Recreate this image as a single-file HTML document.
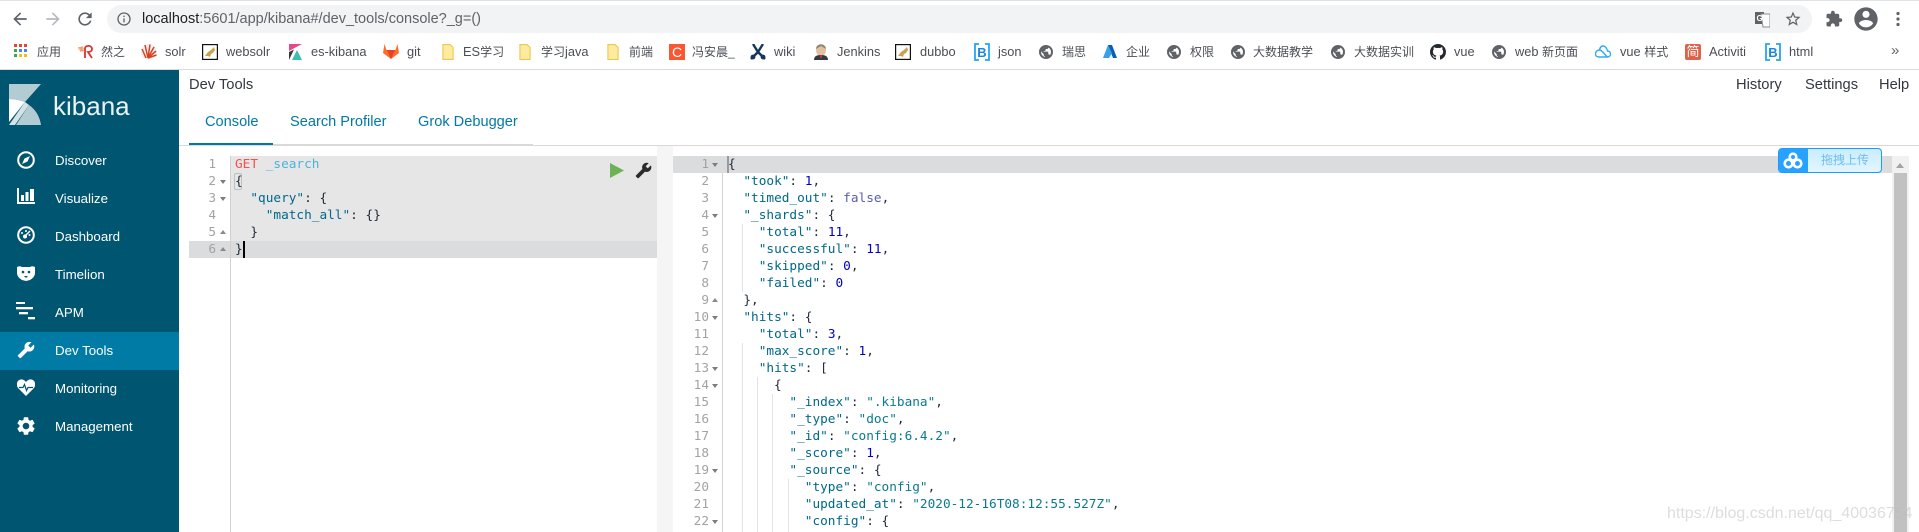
<!DOCTYPE html>
<html><head><meta charset="utf-8"><style>
*{margin:0;padding:0;box-sizing:border-box}
html,body{width:1919px;height:532px;overflow:hidden;background:#fff}
body{position:relative;font-family:"Liberation Sans","Noto Sans CJK SC",sans-serif}
.a{position:absolute}
svg{position:absolute;display:block}
.b{position:absolute;top:44px;height:16px;line-height:16px;font-size:12.8px;color:#4b4e55;white-space:nowrap}
.b i{font-style:normal;font-size:12px}
.nav{position:absolute;left:55px;margin-top:1px;font-size:13.3px;color:#fff;line-height:20px;white-space:nowrap}
.h{position:absolute;top:76px;font-size:14.7px;line-height:18px;color:#343741;white-space:nowrap}
.t{position:absolute;top:113px;font-size:14.6px;line-height:18px;color:#0079a5;white-space:nowrap}
.c{position:absolute;height:17px;line-height:17px;font-family:"DejaVu Sans Mono",monospace;font-size:12.75px;white-space:pre;color:#1f2a37}
.n{position:absolute;height:17px;line-height:17px;font-family:"DejaVu Sans Mono",monospace;font-size:12.75px;color:#a3a3a3;text-align:right;width:30px}
.s{color:#0b7a8e}.k{color:#00688a}.d{color:#0000c8}.f{color:#5a5cad}
.g{position:absolute;width:1px;background:#e3e3e3}
.ar{position:absolute;width:0;height:0;border-left:3px solid transparent;border-right:3px solid transparent}
.dn{border-top:4px solid #7d7d7d}.up{border-bottom:4px solid #8a8a8a}
</style></head><body>
<svg width="0" height="0"><defs>
<symbol id="globe" viewBox="0 0 24 24"><path fill="#5f6368" stroke="#5f6368" stroke-width="1" d="M12 2C6.48 2 2 6.48 2 12s4.48 10 10 10 10-4.48 10-10S17.52 2 12 2zm-1 17.93c-3.95-.49-7-3.85-7-7.93 0-.62.08-1.21.21-1.79L9 15v1c0 1.1.9 2 2 2v1.93zm6.9-2.54c-.26-.81-1-1.39-1.9-1.39h-1v-3c0-.55-.45-1-1-1H8v-2h2c.55 0 1-.45 1-1V7h2c1.1 0 2-.9 2-2v-.41c2.93 1.19 5 4.06 5 7.41 0 2.08-.8 3.97-2.1 5.39z"/></symbol>
<symbol id="folder" viewBox="0 0 12 17"><path fill="#fdeb9f" stroke="#edc84f" stroke-width="1.2" d="M.6.6h7.5l3.3 3v12.8H.6z"/></symbol>
<symbol id="bbox" viewBox="0 0 16 18"><path fill="none" stroke="#25a4f5" stroke-width="1.8" d="M5 1H1v16h4M11 1h4v16h-4"/><text x="8" y="14" font-size="13" font-weight="700" fill="#1787e0" text-anchor="middle" font-family="Liberation Sans">B</text></symbol>
<symbol id="cat" viewBox="0 0 16 16"><rect x=".6" y=".6" width="14.8" height="14.8" fill="#fff" stroke="#111" stroke-width="1.2"/><path fill="#c9a24f" d="M3 12l3-4 3-2 3-3 1 3-2 3-2 1-1 3-2-1z"/></symbol>
<symbol id="wrench" viewBox="0 0 24 24"><path transform="translate(24 0) scale(-1 1)" d="M22.7 19l-9.1-9.1c.9-2.3.4-5-1.5-6.9-2-2-5-2.4-7.4-1.3L9 6 6 9 1.6 4.7C.4 7.1.9 10.1 2.9 12.1c1.9 1.9 4.6 2.4 6.9 1.5l9.1 9.1c.4.4 1 .4 1.4 0l2.3-2.3c.5-.4.5-1.1.1-1.4z"/></symbol>
</defs></svg>

<!-- browser chrome -->
<div class="a" style="left:0;top:0;width:1919px;height:1px;background:#dee1e6"></div>
<svg style="left:10px;top:9px" width="20" height="20" viewBox="0 0 24 24"><path fill="#5f6368" d="M20 11H7.83l5.59-5.59L12 4l-8 8 8 8 1.41-1.41L7.83 13H20v-2z"/></svg>
<svg style="left:43px;top:9px" width="20" height="20" viewBox="0 0 24 24"><path fill="#b6b9bd" transform="translate(24 0) scale(-1 1)" d="M20 11H7.83l5.59-5.59L12 4l-8 8 8 8 1.41-1.41L7.83 13H20v-2z"/></svg>
<svg style="left:75px;top:9px" width="20" height="20" viewBox="0 0 24 24"><path fill="#5f6368" d="M17.65 6.35C16.2 4.9 14.21 4 12 4c-4.42 0-7.99 3.58-7.99 8s3.57 8 7.99 8c3.73 0 6.84-2.55 7.73-6h-2.08c-.82 2.33-3.04 4-5.65 4-3.31 0-6-2.69-6-6s2.69-6 6-6c1.66 0 3.14.69 4.22 1.78L13 11h7V4l-2.35 2.35z"/></svg>
<div class="a" style="left:107px;top:5px;width:1705px;height:28px;background:#f1f3f4;border-radius:14px"></div>
<svg style="left:116px;top:11px" width="16" height="16" viewBox="0 0 24 24"><path fill="#5f6368" d="M11 7h2v2h-2zm0 4h2v6h-2zm1-9C6.48 2 2 6.48 2 12s4.48 10 10 10 10-4.48 10-10S17.52 2 12 2zm0 18c-4.41 0-8-3.59-8-8s3.59-8 8-8 8 3.59 8 8-3.59 8-8 8z"/></svg>
<div class="a" style="left:142px;top:10px;font-size:14.5px;line-height:18px;color:#202124;white-space:nowrap">localhost<span style="color:#5f6368">:5601/app/kibana#/dev_tools/console?_g=()</span></div>
<svg style="left:1755px;top:11px" width="15" height="17" viewBox="0 0 15 17"><rect x="0" y="1" width="9" height="12" fill="#5f6368"/><path d="M6 3h9v13H8z" fill="#fff" stroke="#8a8d91"/><text x="1.5" y="10" font-size="8" fill="#fff" font-family="Liberation Sans" font-weight="700">G</text></svg>
<svg style="left:1784px;top:10px" width="18" height="18" viewBox="0 0 24 24"><path fill="#5f6368" d="M22 9.24l-7.19-.62L12 2 9.19 8.63 2 9.24l5.46 4.73L5.82 21 12 17.27 18.18 21l-1.63-7.03L22 9.24zM12 15.4l-3.76 2.27 1-4.28-3.32-2.88 4.38-.38L12 6.1l1.71 4.04 4.38.38-3.32 2.88 1 4.28L12 15.4z"/></svg>
<svg style="left:1825px;top:10px" width="18" height="18" viewBox="0 0 24 24"><path fill="#5f6368" d="M20.5 11H19V7c0-1.1-.9-2-2-2h-4V3.5C13 2.12 11.88 1 10.5 1S8 2.12 8 3.5V5H4c-1.1 0-1.99.9-1.99 2v3.8H3.5c1.49 0 2.7 1.21 2.7 2.7s-1.21 2.7-2.7 2.7H2V20c0 1.1.9 2 2 2h3.8v-1.5c0-1.49 1.21-2.7 2.7-2.7 1.49 0 2.7 1.21 2.7 2.7V22H17c1.1 0 2-.9 2-2v-4h1.5c1.38 0 2.5-1.12 2.5-2.5S21.88 11 20.5 11z"/></svg>
<svg style="left:1852px;top:5px" width="28" height="28" viewBox="0 0 24 24"><path fill="#5f6368" d="M12 2C6.48 2 2 6.48 2 12s4.48 10 10 10 10-4.48 10-10S17.52 2 12 2zm0 3c1.66 0 3 1.34 3 3s-1.34 3-3 3-3-1.34-3-3 1.34-3 3-3zm0 14.2c-2.5 0-4.71-1.28-6-3.22.03-1.99 4-3.08 6-3.08 1.99 0 5.97 1.09 6 3.08-1.29 1.94-3.5 3.22-6 3.22z"/></svg>
<svg style="left:1896px;top:11px" width="4" height="16" viewBox="0 0 4 16"><circle cx="2" cy="2.5" r="1.6" fill="#5f6368"/><circle cx="2" cy="8" r="1.6" fill="#5f6368"/><circle cx="2" cy="13.5" r="1.6" fill="#5f6368"/></svg>

<!-- bookmarks -->
<svg style="left:14px;top:44px" width="13" height="13" viewBox="0 0 13 13"><g fill="#ea4335"><rect width="3" height="3"/><rect x="5" width="3" height="3"/><rect x="10" width="3" height="3"/></g><g fill="#34a853"><rect y="5" width="3" height="3"/><rect y="10" width="3" height="3"/></g><rect x="5" y="5" width="3" height="3" fill="#4285f4"/><rect x="10" y="5" width="3" height="3" fill="#4285f4"/><g fill="#fbbc05"><rect x="5" y="10" width="3" height="3"/><rect x="10" y="10" width="3" height="3"/></g></svg>
<div class="b" style="left:37px"><i>应用</i></div>
<svg style="left:78px;top:44px" width="16" height="15" viewBox="0 0 16 15"><path d="M0 4l5-1-3 2 3 0-3 2 4-.5" fill="none" stroke="#f39a6b" stroke-width="1.2"/><path d="M7 14V4c1-3 7-3 7 1 0 2-2 3-4 3l4 6" fill="none" stroke="#d9352c" stroke-width="1.8"/></svg>
<div class="b" style="left:101px"><i>然之</i></div>
<svg style="left:141px;top:44px" width="16" height="16" viewBox="0 0 16 16"><circle cx="8" cy="8" r="8" fill="#f3f1f5"/><g stroke="#d9411e" stroke-width="1.5" fill="none"><path d="M7 14L4 1"/><path d="M7 14L9 0.5"/><path d="M7 14L13 3"/><path d="M7 14L15 7"/><path d="M7 14L15.5 11"/><path d="M5 14L1 5"/></g></svg>
<div class="b" style="left:165px">solr</div>
<svg style="left:202px;top:44px" width="16" height="16"><use href="#cat"/></svg>
<div class="b" style="left:226px">websolr</div>
<svg style="left:289px;top:44px" width="13" height="16" viewBox="0 0 13 16"><path d="M0 0h13L0 7z" fill="#e8488b"/><path d="M0 8l5-2.5L0 16z" fill="#33393c"/><path d="M3 16L8 6l5 10z" fill="#3ebeb0"/></svg>
<div class="b" style="left:311px">es-kibana</div>
<svg style="left:383px;top:44px" width="16" height="15" viewBox="0 0 16 15"><path d="M8 15L0 9l1.5-9 2 6h9l2-6L16 9z" fill="#fc6d26"/><path d="M8 15L4 6h8z" fill="#e24329"/></svg>
<div class="b" style="left:407px">git</div>
<svg style="left:442px;top:44px" width="12" height="16"><use href="#folder"/></svg>
<div class="b" style="left:463px">ES<i>学习</i></div>
<svg style="left:519px;top:44px" width="12" height="16"><use href="#folder"/></svg>
<div class="b" style="left:541px"><i>学习</i>java</div>
<svg style="left:607px;top:44px" width="12" height="16"><use href="#folder"/></svg>
<div class="b" style="left:629px"><i>前端</i></div>
<div class="a" style="left:669px;top:44px;width:16px;height:16px;background:#fc5531;color:#fff;font-size:14px;line-height:16px;text-align:center">C</div>
<div class="b" style="left:692px"><i>冯安晨_</i></div>
<svg style="left:750px;top:44px" width="16" height="16" viewBox="0 0 16 16"><path d="M3 0l5 8 5-8M1 15l7-7 7 7" fill="none" stroke="#16365c" stroke-width="2.4"/><circle cx="3" cy="13" r="2.4" fill="#16365c"/><circle cx="13" cy="13" r="2.4" fill="#16365c"/></svg>
<div class="b" style="left:774px">wiki</div>
<svg style="left:813px;top:44px" width="16" height="16" viewBox="0 0 16 16"><ellipse cx="8" cy="6" rx="5" ry="6" fill="#e2c0a0"/><path d="M3 5c0-6 10-6 10 0L8 2z" fill="#8a8478"/><path d="M1 16c0-4 3-5 7-5s7 1 7 5z" fill="#333b49"/><rect x="7" y="11" width="2" height="3" fill="#c0392b"/></svg>
<div class="b" style="left:837px">Jenkins</div>
<svg style="left:895px;top:44px" width="16" height="16"><use href="#cat"/></svg>
<div class="b" style="left:920px">dubbo</div>
<svg style="left:974px;top:43px" width="16" height="18"><use href="#bbox"/></svg>
<div class="b" style="left:998px">json</div>
<svg style="left:1038px;top:44px" width="16" height="16"><use href="#globe"/></svg>
<div class="b" style="left:1062px"><i>瑞思</i></div>
<svg style="left:1103px;top:45px" width="14" height="13" viewBox="0 0 14 13"><path d="M5 0h4l5 13h-4z" fill="#0a5fb4"/><path d="M5 0l4 8-3 5H0z" fill="#3aa0e8"/></svg>
<div class="b" style="left:1126px"><i>企业</i></div>
<svg style="left:1166px;top:44px" width="16" height="16"><use href="#globe"/></svg>
<div class="b" style="left:1190px"><i>权限</i></div>
<svg style="left:1230px;top:44px" width="16" height="16"><use href="#globe"/></svg>
<div class="b" style="left:1253px"><i>大数据教学</i></div>
<svg style="left:1330px;top:44px" width="16" height="16"><use href="#globe"/></svg>
<div class="b" style="left:1354px"><i>大数据实训</i></div>
<svg style="left:1430px;top:44px" width="16" height="16" viewBox="0 0 16 16"><path fill="#24292e" d="M8 0C3.58 0 0 3.58 0 8c0 3.54 2.29 6.53 5.47 7.59.4.07.55-.17.55-.38 0-.19-.01-.82-.01-1.49-2.01.37-2.53-.49-2.69-.94-.09-.23-.48-.94-.82-1.13-.28-.15-.68-.52-.01-.53.63-.01 1.08.58 1.23.82.72 1.21 1.87.87 2.33.66.07-.52.28-.87.51-1.07-1.78-.2-3.64-.89-3.64-3.95 0-.87.31-1.59.82-2.15-.08-.2-.36-1.02.08-2.12 0 0 .67-.21 2.2.82.64-.18 1.32-.27 2-.27.68 0 1.36.09 2 .27 1.53-1.04 2.2-.82 2.2-.82.44 1.1.16 1.92.08 2.12.51.56.82 1.27.82 2.15 0 3.07-1.87 3.75-3.65 3.95.29.25.54.73.54 1.48 0 1.07-.01 1.93-.01 2.2 0 .21.15.46.55.38A8.013 8.013 0 0016 8c0-4.42-3.58-8-8-8z"/></svg>
<div class="b" style="left:1454px">vue</div>
<svg style="left:1491px;top:44px" width="16" height="16"><use href="#globe"/></svg>
<div class="b" style="left:1515px">web <i>新页面</i></div>
<svg style="left:1595px;top:45px" width="16" height="13" viewBox="0 0 16 13"><path d="M4 12h8.5c2 0 3-1.5 3-3s-1-3-3-3C12 3 10 1 8 1S5 2.5 4.5 5C2 5 .5 7 .5 9s1.5 3 3.5 3z M4.5 5C7 5 9 9 12.5 12" fill="none" stroke="#31aaf0" stroke-width="1.4"/></svg>
<div class="b" style="left:1620px">vue <i>样式</i></div>
<div class="a" style="left:1685px;top:44px;width:16px;height:16px;background:#e0604a;color:#fff;font-size:13px;line-height:16px;text-align:center;border-radius:2px">简</div>
<div class="b" style="left:1709px">Activiti</div>
<svg style="left:1765px;top:43px" width="16" height="18"><use href="#bbox"/></svg>
<div class="b" style="left:1789px">html</div>
<div class="a" style="left:1891px;top:42px;font-size:15px;line-height:18px;color:#5f6368">»</div>
<div class="a" style="left:0;top:69px;width:1919px;height:1px;background:#d9dadc"></div>

<!-- sidebar -->
<div class="a" style="left:0;top:70px;width:179px;height:462px;background:#005571"></div>
<div class="a" style="left:0;top:332px;width:179px;height:38px;background:#007ba6"></div>
<svg style="left:9px;top:84px" width="33" height="42" viewBox="9 84 33 42"><path d="M9 84H41L25 102Q17 99 9 99Z" fill="#b3ccd4"/><path d="M9 99Q17 99 25 102L9 122V125Z" fill="#fff"/><path d="M9 125L25 102 L29 105 L15 125Z" fill="#d5e3e7"/><path d="M16 125L29 105Q39 112 41 125Z" fill="#b3ccd4"/></svg>
<div class="a" style="left:53px;top:90px;font-size:26px;line-height:32px;color:#eaf2f4;white-space:nowrap">kibana</div>

<svg style="left:17px;top:151px" width="18" height="18" viewBox="0 0 18 18"><circle cx="9" cy="9" r="7.8" fill="none" stroke="#fff" stroke-width="2"/><path d="M13 5L10.5 10.5 5 13 7.5 7.5Z" fill="#fff"/></svg>
<div class="nav" style="top:150px">Discover</div>
<svg style="left:17px;top:188px" width="18" height="16" viewBox="0 0 18 16"><path d="M0 0h2v14h16v2H0z" fill="#fff"/><rect x="4" y="7" width="3" height="6" fill="#fff"/><rect x="8.5" y="4" width="3" height="9" fill="#fff"/><rect x="13" y="1" width="4" height="12" fill="#fff"/></svg>
<div class="nav" style="top:188px">Visualize</div>
<svg style="left:17px;top:226px" width="18" height="18" viewBox="0 0 18 18"><circle cx="9" cy="9" r="7.8" fill="none" stroke="#fff" stroke-width="2"/><circle cx="8" cy="10.5" r="2" fill="#fff"/><path d="M8 10L13 5" stroke="#fff" stroke-width="1.5"/><circle cx="12.5" cy="9" r="1" fill="#fff"/><circle cx="9" cy="5" r="1" fill="#fff"/><circle cx="5" cy="7" r="1" fill="#fff"/></svg>
<div class="nav" style="top:226px">Dashboard</div>
<svg style="left:17px;top:266px" width="18" height="15" viewBox="0 0 18 15"><path d="M0 1q3-1.5 5 0h8q2-1.5 5 0v6q0 4-5 7l-4 1-4-1q-5-3-5-7z" fill="#fff"/><circle cx="6" cy="6" r="1.3" fill="#005571"/><circle cx="12" cy="6" r="1.3" fill="#005571"/><path d="M7 10h4l-2 2z" fill="#005571"/></svg>
<div class="nav" style="top:264px">Timelion</div>
<svg style="left:16px;top:302px" width="20" height="18" viewBox="0 0 20 18"><g fill="#fff"><rect x="0" y="0" width="9" height="2"/><rect x="0" y="5" width="17" height="2.3"/><rect x="3" y="10" width="9" height="2.3"/><rect x="12" y="15" width="7" height="2.3"/></g></svg>
<div class="nav" style="top:302px">APM</div>
<svg style="left:17px;top:341px;fill:#fff" width="18" height="18" viewBox="0 0 24 24"><use href="#wrench"/></svg>
<div class="nav" style="top:340px">Dev Tools</div>
<svg style="left:17px;top:379px" width="18" height="17" viewBox="0 0 18 17"><path d="M9 17L1.5 9.5C-1 7-.5 3 1.5 1.5 4-.5 7 .5 9 3c2-2.5 5-3.5 7.5-1.5 2 1.5 2.5 5.5 0 8z" fill="#fff"/><path d="M2 8.5h4l1.5-3 2 6 1.5-3h5" fill="none" stroke="#005571" stroke-width="1.2"/></svg>
<div class="nav" style="top:378px">Monitoring</div>
<svg style="left:15px;top:415px" width="22" height="22" viewBox="0 0 24 24"><path fill="#fff" d="M19.14 12.94c.04-.3.06-.61.06-.94 0-.32-.02-.64-.07-.94l2.03-1.58c.18-.14.23-.41.12-.61l-1.92-3.32c-.12-.22-.37-.29-.59-.22l-2.39.96c-.5-.38-1.03-.7-1.62-.94l-.36-2.54c-.04-.24-.24-.41-.48-.41h-3.84c-.24 0-.43.17-.47.41l-.36 2.54c-.59.24-1.13.57-1.62.94l-2.39-.96c-.22-.08-.47 0-.59.22L2.74 8.87c-.12.21-.08.47.12.61l2.03 1.58c-.05.3-.09.63-.09.94s.02.64.07.94l-2.03 1.58c-.18.14-.23.41-.12.61l1.92 3.32c.12.22.37.29.59.22l2.39-.96c.5.38 1.03.7 1.62.94l.36 2.54c.05.24.24.41.48.41h3.84c.24 0 .44-.17.47-.41l.36-2.54c.59-.24 1.13-.56 1.62-.94l2.39.96c.22.08.47 0 .59-.22l1.92-3.32c.12-.22.07-.47-.12-.61l-2.01-1.58zM12 15.6c-1.98 0-3.6-1.62-3.6-3.6s1.62-3.6 3.6-3.6 3.6 1.62 3.6 3.6-1.62 3.6-3.6 3.6z"/></svg>
<div class="nav" style="top:416px">Management</div>

<!-- header -->
<div class="h" style="left:189px">Dev Tools</div>
<div class="h" style="left:1736px">History</div>
<div class="h" style="left:1805px">Settings</div>
<div class="h" style="left:1879px">Help</div>
<div class="t" style="left:205px">Console</div>
<div class="t" style="left:290px">Search Profiler</div>
<div class="t" style="left:418px">Grok Debugger</div>
<div class="a" style="left:179px;top:145px;width:1740px;height:1px;background:#d9d9d9"></div>
<div class="a" style="left:189px;top:144px;width:344px;height:2px;background:#d9d9d9"></div>
<div class="a" style="left:189px;top:143px;width:84px;height:2px;background:#0079a5"></div>

<!-- editor -->
<div class="a" style="left:231px;top:156px;width:426px;height:85px;background:#e6e6e6"></div>
<div class="a" style="left:189px;top:241px;width:468px;height:17px;background:#dbdcdd"></div>
<div class="a" style="left:230px;top:156px;width:1px;height:376px;background:#d0d0d0"></div>
<div class="a" style="left:657px;top:146px;width:16px;height:386px;background:#f5f5f5"></div>
<div class="n" style="left:186px;top:156px">1</div>
<div class="n" style="left:186px;top:173px">2</div>
<div class="n" style="left:186px;top:190px">3</div>
<div class="n" style="left:186px;top:207px">4</div>
<div class="n" style="left:186px;top:224px">5</div>
<div class="n" style="left:186px;top:241px">6</div>
<div class="ar dn" style="left:220px;top:180px"></div>
<div class="ar dn" style="left:220px;top:197px"></div>
<div class="ar up" style="left:220px;top:230px"></div>
<div class="ar up" style="left:220px;top:247px"></div>
<div class="a" style="left:234px;top:173px;width:8px;height:17px;border:1px solid #bfbfbf;border-radius:2px"></div>
<div class="c" style="left:235px;top:156px"><span style="color:#f5504a">GET</span> <span style="color:#4db2d8">_search</span></div>
<div class="c" style="left:235px;top:173px">{</div>
<div class="c" style="left:235px;top:190px">  <span class="k">"query"</span>: {</div>
<div class="c" style="left:235px;top:207px">    <span class="k">"match_all"</span>: {}</div>
<div class="c" style="left:235px;top:224px">  }</div>
<div class="c" style="left:235px;top:241px">}</div>
<div class="a" style="left:243px;top:241px;width:2px;height:17px;background:#000"></div>
<svg style="left:610px;top:163px" width="14" height="15" viewBox="0 0 14 15"><path d="M0 0L14 7.5 0 15z" fill="#6db356"/></svg>
<svg style="left:635px;top:162px;fill:#2b2b2b" width="17" height="17" viewBox="0 0 24 24"><use href="#wrench"/></svg>

<!-- output -->
<div class="a" style="left:673px;top:156px;width:1219px;height:17px;background:#dbdcdd"></div>
<div class="a" style="left:722px;top:173px;width:1px;height:359px;background:#d4d4d4"></div>
<div class="a" style="left:727px;top:156px;width:2px;height:17px;background:#9a9a9a"></div>
<div class="g" style="left:742px;top:224px;height:68px"></div>
<div class="g" style="left:742px;top:343px;height:189px"></div>
<div class="g" style="left:757px;top:377px;height:155px"></div>
<div class="g" style="left:772px;top:394px;height:138px"></div>
<div class="g" style="left:788px;top:479px;height:53px"></div>
<div class="n" style="left:679px;top:156px">1</div>
<div class="n" style="left:679px;top:173px">2</div>
<div class="n" style="left:679px;top:190px">3</div>
<div class="n" style="left:679px;top:207px">4</div>
<div class="n" style="left:679px;top:224px">5</div>
<div class="n" style="left:679px;top:241px">6</div>
<div class="n" style="left:679px;top:258px">7</div>
<div class="n" style="left:679px;top:275px">8</div>
<div class="n" style="left:679px;top:292px">9</div>
<div class="n" style="left:679px;top:309px">10</div>
<div class="n" style="left:679px;top:326px">11</div>
<div class="n" style="left:679px;top:343px">12</div>
<div class="n" style="left:679px;top:360px">13</div>
<div class="n" style="left:679px;top:377px">14</div>
<div class="n" style="left:679px;top:394px">15</div>
<div class="n" style="left:679px;top:411px">16</div>
<div class="n" style="left:679px;top:428px">17</div>
<div class="n" style="left:679px;top:445px">18</div>
<div class="n" style="left:679px;top:462px">19</div>
<div class="n" style="left:679px;top:479px">20</div>
<div class="n" style="left:679px;top:496px">21</div>
<div class="n" style="left:679px;top:513px">22</div>
<div class="ar dn" style="left:712px;top:163px"></div>
<div class="ar dn" style="left:712px;top:214px"></div>
<div class="ar up" style="left:712px;top:298px"></div>
<div class="ar dn" style="left:712px;top:316px"></div>
<div class="ar dn" style="left:712px;top:367px"></div>
<div class="ar dn" style="left:712px;top:384px"></div>
<div class="ar dn" style="left:712px;top:469px"></div>
<div class="ar dn" style="left:712px;top:520px"></div>
<div class="c" style="left:728px;top:156px">{</div>
<div class="c" style="left:728px;top:173px">  <span class="k">"took"</span>: <span class="d">1</span>,</div>
<div class="c" style="left:728px;top:190px">  <span class="k">"timed_out"</span>: <span class="f">false</span>,</div>
<div class="c" style="left:728px;top:207px">  <span class="k">"_shards"</span>: {</div>
<div class="c" style="left:728px;top:224px">    <span class="k">"total"</span>: <span class="d">11</span>,</div>
<div class="c" style="left:728px;top:241px">    <span class="k">"successful"</span>: <span class="d">11</span>,</div>
<div class="c" style="left:728px;top:258px">    <span class="k">"skipped"</span>: <span class="d">0</span>,</div>
<div class="c" style="left:728px;top:275px">    <span class="k">"failed"</span>: <span class="d">0</span></div>
<div class="c" style="left:728px;top:292px">  },</div>
<div class="c" style="left:728px;top:309px">  <span class="k">"hits"</span>: {</div>
<div class="c" style="left:728px;top:326px">    <span class="k">"total"</span>: <span class="d">3</span>,</div>
<div class="c" style="left:728px;top:343px">    <span class="k">"max_score"</span>: <span class="d">1</span>,</div>
<div class="c" style="left:728px;top:360px">    <span class="k">"hits"</span>: [</div>
<div class="c" style="left:728px;top:377px">      {</div>
<div class="c" style="left:728px;top:394px">        <span class="k">"_index"</span>: <span class="s">".kibana"</span>,</div>
<div class="c" style="left:728px;top:411px">        <span class="k">"_type"</span>: <span class="s">"doc"</span>,</div>
<div class="c" style="left:728px;top:428px">        <span class="k">"_id"</span>: <span class="s">"config:6.4.2"</span>,</div>
<div class="c" style="left:728px;top:445px">        <span class="k">"_score"</span>: <span class="d">1</span>,</div>
<div class="c" style="left:728px;top:462px">        <span class="k">"_source"</span>: {</div>
<div class="c" style="left:728px;top:479px">          <span class="k">"type"</span>: <span class="s">"config"</span>,</div>
<div class="c" style="left:728px;top:496px">          <span class="k">"updated_at"</span>: <span class="s">"2020-12-16T08:12:55.527Z"</span>,</div>
<div class="c" style="left:728px;top:513px">          <span class="k">"config"</span>: {</div>

<!-- scrollbar -->
<div class="a" style="left:1892px;top:156px;width:17px;height:376px;background:#f1f1f1"></div>
<div class="a" style="left:1894px;top:173px;width:13px;height:359px;background:#c1c1c1"></div>
<div class="ar" style="left:1896px;top:163px;border-left-width:4px;border-right-width:4px;border-bottom:5px solid #a3a3a3"></div>

<!-- upload widget -->
<div class="a" style="left:1778px;top:148px;width:104px;height:25px;border:1px solid #1e9bff;border-radius:4px;overflow:hidden;background:linear-gradient(#c9ecff,#e3f6ff)">
<div class="a" style="left:0;top:0;width:29px;height:23px;background:#27a2ff"></div>
<div class="a" style="left:42px;top:3px;font-size:12px;line-height:17px;color:#6fbdf2;white-space:nowrap">拖拽上传</div>
</div>
<svg style="left:1783px;top:151px" width="20" height="19" viewBox="0 0 20 19"><g fill="none" stroke="#fff" stroke-width="2.6"><circle cx="10" cy="6" r="3.3"/><circle cx="5.5" cy="12.5" r="3.8"/><circle cx="14.5" cy="12.5" r="3.8"/></g></svg>

<!-- watermark -->
<div class="a" style="left:1667px;top:505px;font-size:16px;line-height:18px;color:rgba(190,190,190,.52);white-space:nowrap">https://blog.csdn.net/qq_40036754</div>
</body></html>
